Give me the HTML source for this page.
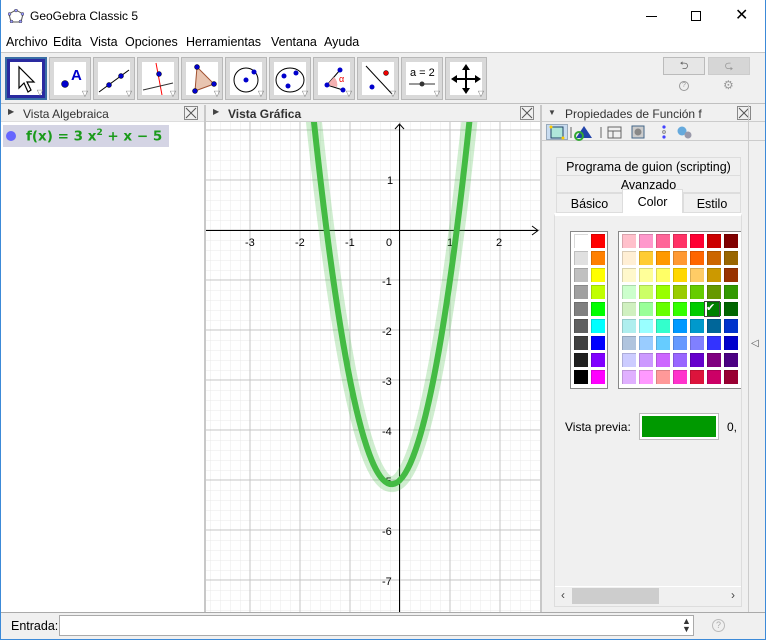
<!DOCTYPE html>
<html><head><meta charset="utf-8">
<style>
*{margin:0;padding:0;box-sizing:border-box}
body{width:766px;height:640px;overflow:hidden;background:#f0f0f0;font-family:"Liberation Sans",Arial,sans-serif;font-size:12px;color:#000;position:relative}
.a{position:absolute}
.btn{position:absolute;top:57px;width:42px;height:43px;background:#d9d9d9;border:1px solid #b8b8b8}
.btn .in{position:absolute;left:4px;top:4px;width:32px;height:33px;background:#fff}
.btn svg{position:absolute;left:4px;top:4px}
.tri{position:absolute;right:2px;bottom:1px;font-size:8px;color:#777}
.hdr{position:absolute;top:105px;height:17px;background:#f0f0f0;font-size:12px;color:#333}
.sw{position:absolute;width:14px;height:14px;border-left:1px solid rgba(0,0,0,.15);border-top:1px solid rgba(0,0,0,.15)}
.xb{position:absolute;width:14px;height:14px;border:1px solid #888;background:#f0f0f0}
.m{position:absolute;top:35px;font-size:12.5px}
</style></head><body>
<div class="a" style="left:0;top:0;width:766px;height:640px;border:1px solid #3c8ad8;border-top:none"></div>
<div class="a" style="left:1px;top:0;width:764px;height:32px;background:#fff"></div>
<svg class="a" style="left:8px;top:9px" width="16" height="14"><polygon points="8,1 15,5 13,13 3,13 1,5" fill="none" stroke="#555" stroke-width="1"/><g fill="#99f" stroke="#333" stroke-width=".5"><circle cx="8" cy="1.5" r="1.5"/><circle cx="14.5" cy="5" r="1.5"/><circle cx="12.5" cy="12.5" r="1.5"/><circle cx="3.5" cy="12.5" r="1.5"/><circle cx="1.5" cy="5" r="1.5"/></g></svg>
<div class="a" style="left:30px;top:9px;font-size:12px">GeoGebra Classic 5</div>
<div class="a" style="left:646px;top:16px;width:11px;height:1px;background:#000"></div>
<div class="a" style="left:691px;top:11px;width:10px;height:10px;border:1px solid #000"></div>
<div class="a" style="left:735px;top:8px;font-size:16px;line-height:16px">✕</div>
<div class="a" style="left:1px;top:32px;width:764px;height:21px;background:#fff;border-bottom:1px solid #c8c8c8"></div>
<span class="m" style="left:6px">Archivo</span><span class="m" style="left:53px">Edita</span><span class="m" style="left:90px">Vista</span><span class="m" style="left:125px">Opciones</span><span class="m" style="left:186px">Herramientas</span><span class="m" style="left:271px">Ventana</span><span class="m" style="left:324px">Ayuda</span>
<div class="a" style="left:1px;top:53px;width:764px;height:51px;background:#f0f0f0;border-bottom:1px solid #c0c0c0"></div>
<div class="btn" style="left:5px;border:2px solid #3a6ea5;background:#2a2aa0"><div class="in" style="left:3px;top:3px;width:32px;height:33px"></div>
<svg width="34" height="35" style="left:3px;top:3px"><path d="M9 5 L9 26 L14 21 L18 30 L21 28 L17 20 L24 20 Z" fill="#fff" stroke="#000" stroke-width="1.2"/></svg><span class="tri">▽</span></div>
<div class="btn" style="left:49px"><div class="in"></div><svg width="32" height="33"><circle cx="11" cy="22" r="3.5" fill="#00c" stroke="#000" stroke-width=".5"/><text x="17" y="18" font-size="15" font-weight="bold" fill="#00c" font-family="Liberation Sans">A</text></svg><span class="tri">▽</span></div>
<div class="btn" style="left:93px"><div class="in"></div><svg width="32" height="33"><line x1="1" y1="30" x2="31" y2="8" stroke="#000"/><circle cx="11" cy="23" r="2.5" fill="#00c" stroke="#000" stroke-width=".5"/><circle cx="23" cy="14" r="2.5" fill="#00c" stroke="#000" stroke-width=".5"/></svg><span class="tri">▽</span></div>
<div class="btn" style="left:137px"><div class="in"></div><svg width="32" height="33"><line x1="14" y1="1" x2="20" y2="33" stroke="#f00"/><line x1="1" y1="28" x2="31" y2="21" stroke="#333"/><circle cx="17" cy="12" r="2.5" fill="#00c" stroke="#000" stroke-width=".5"/></svg><span class="tri">▽</span></div>
<div class="btn" style="left:181px"><div class="in"></div><svg width="32" height="33"><polygon points="11,5 28,22 9,29" fill="#e8c4b0" stroke="#a05030"/><g fill="#00c" stroke="#000" stroke-width=".5"><circle cx="11" cy="5" r="2.5"/><circle cx="28" cy="22" r="2.5"/><circle cx="9" cy="29" r="2.5"/></g></svg><span class="tri">▽</span></div>
<div class="btn" style="left:225px"><div class="in"></div><svg width="32" height="33"><circle cx="16" cy="18" r="12" fill="none" stroke="#000"/><circle cx="16" cy="18" r="2.5" fill="#00c"/><circle cx="24" cy="10" r="2.5" fill="#00c"/></svg><span class="tri">▽</span></div>
<div class="btn" style="left:269px"><div class="in"></div><svg width="32" height="33"><ellipse cx="16" cy="18" rx="14" ry="12" fill="none" stroke="#000"/><circle cx="10" cy="14" r="2.5" fill="#00c"/><circle cx="22" cy="11" r="2.5" fill="#00c"/><circle cx="14" cy="24" r="2.5" fill="#00c"/></svg><span class="tri">▽</span></div>
<div class="btn" style="left:313px"><div class="in"></div><svg width="32" height="33"><path d="M9 23 L22 8 M9 23 L25 28" stroke="#000" fill="none"/><path d="M9 23 L16 15 A10 10 0 0 1 19 25 Z" fill="#f4b0b0"/><text x="21" y="20" font-size="9" fill="#e00">α</text><g fill="#00c"><circle cx="9" cy="23" r="2.5"/><circle cx="22" cy="8" r="2.5"/><circle cx="25" cy="28" r="2.5"/></g></svg><span class="tri">▽</span></div>
<div class="btn" style="left:357px"><div class="in"></div><svg width="32" height="33"><line x1="4" y1="4" x2="30" y2="32" stroke="#000"/><circle cx="10" cy="25" r="2.5" fill="#00c"/><circle cx="24" cy="11" r="2.5" fill="#e00" stroke="#000" stroke-width=".5"/></svg><span class="tri">▽</span></div>
<div class="btn" style="left:401px"><div class="in"></div><svg width="32" height="33"><text x="4" y="14" font-size="11" font-family="Liberation Sans">a = 2</text><line x1="3" y1="22" x2="29" y2="22" stroke="#333"/><circle cx="16" cy="22" r="2.5" fill="#333"/></svg><span class="tri">▽</span></div>
<div class="btn" style="left:445px"><div class="in"></div><svg width="32" height="33"><path d="M16 4 V30 M3 17 H29" stroke="#000" stroke-width="2"/><path d="M16 2 L12 8 H20Z M16 32 L12 26 H20Z M1 17 L7 13 V21Z M31 17 L25 13 V21Z" fill="#000"/></svg><span class="tri">▽</span></div>
<div class="a" style="left:663px;top:57px;width:42px;height:18px;border:1px solid #bbb;background:#e6e6e6;text-align:center;color:#666;font-size:11px;line-height:16px">⮌</div>
<div class="a" style="left:708px;top:57px;width:42px;height:18px;border:1px solid #ccc;background:#d6d6d6;text-align:center;color:#999;font-size:11px;line-height:16px">⮎</div>
<div class="a" style="left:679px;top:81px;width:10px;height:10px;border:1px solid #999;border-radius:50%;font-size:7px;color:#999;text-align:center;line-height:8px">?</div>
<div class="a" style="left:723px;top:78px;font-size:12px;color:#999">⚙</div>
<div class="a" style="left:1px;top:105px;width:203px;height:507px;background:#fff"></div>
<div class="hdr" style="left:1px;width:203px;border-bottom:1px solid #ddd"><span class="a" style="left:7px;top:2px;font-size:8px;color:#444">▶</span><span class="a" style="left:22px;top:2px">Vista Algebraica</span></div>
<div class="xb" style="left:184px;top:106px"><svg class="a" style="left:0;top:0" width="12" height="12"><path d="M1 1L11 11M11 1L1 11" stroke="#555"/></svg></div>
<div class="a" style="left:3px;top:125px;width:166px;height:22px;background:#d4d4e4"></div>
<div class="a" style="left:6px;top:131px;width:10px;height:10px;border-radius:50%;background:#6666ff"></div>
<div class="a" style="left:26px;top:128px;font-family:'DejaVu Sans',sans-serif;font-weight:bold;font-size:13.5px;color:#1a9a1a;white-space:nowrap">f(x) = 3 x<sup style="font-size:9px">2</sup> + x − 5</div>
<div class="a" style="left:204px;top:105px;width:2px;height:507px;background:#c8c8c8"></div>
<div class="a" style="left:540px;top:105px;width:2px;height:507px;background:#c8c8c8"></div>
<div class="hdr" style="left:206px;width:334px;border-bottom:1px solid #ccc"><span class="a" style="left:7px;top:2px;font-size:8px;color:#444">▶</span><span class="a" style="left:22px;top:2px;font-weight:bold;color:#333">Vista Gráfica</span></div>
<div class="xb" style="left:520px;top:106px"><svg class="a" style="left:0;top:0" width="12" height="12"><path d="M1 1L11 11M11 1L1 11" stroke="#555"/></svg></div>
<svg class="a" style="left:206px;top:122px" width="334" height="490">
<defs><pattern id="mn" x="4" y="8" width="10" height="10" patternUnits="userSpaceOnUse"><path d="M0 0H10M0 0V10" stroke="#e8e8e8" stroke-width="1" fill="none"/></pattern>
<pattern id="mj" x="-6.5" y="7.5" width="50" height="50" patternUnits="userSpaceOnUse"><path d="M0 0.5H50M0.5 0V50" stroke="#c4c4c4" stroke-width="1" fill="none"/></pattern></defs>
<rect width="334" height="490" fill="#fff"/>
<rect width="334" height="490" fill="url(#mn)"/>
<rect width="334" height="490" fill="url(#mj)"/>
<line x1="0" y1="108.5" x2="332" y2="108.5" stroke="#000"/>
<line x1="193.5" y1="2" x2="193.5" y2="490" stroke="#000"/>
<path d="M189 7 L193.5 2 L198 7 M326 104 L332 108.5 L326 113" stroke="#000" fill="none"/>
<g font-family="Liberation Sans" font-size="11" fill="#000">
<text x="39" y="124">-3</text><text x="89" y="124">-2</text><text x="139" y="124">-1</text><text x="180" y="124">0</text><text x="241" y="124">1</text><text x="290" y="124">2</text>
<text x="181" y="62">1</text><text x="176" y="163">-1</text><text x="176" y="213">-2</text><text x="176" y="263">-3</text><text x="176" y="313">-4</text><text x="176" y="363">-5</text><text x="176" y="413">-6</text><text x="176" y="463">-7</text>
</g>
<path d="M104 -38 Q186.5 770.5 269 -54.5" fill="none" stroke="#44bb44" stroke-opacity="0.25" stroke-width="16"/>
<path d="M104 -38 Q186.5 770.5 269 -54.5" fill="none" stroke="#44bb44" stroke-width="6"/>
</svg>
<div class="hdr" style="left:542px;width:223px;border-bottom:1px solid #ccc"><span class="a" style="left:6px;top:3px;font-size:8px;color:#444">▼</span><span class="a" style="left:23px;top:2px">Propiedades de Función f</span></div>
<div class="xb" style="left:737px;top:106px"><svg class="a" style="left:0;top:0" width="12" height="12"><path d="M1 1L11 11M11 1L1 11" stroke="#555"/></svg></div>
<div class="a" style="left:542px;top:123px;width:223px;height:18px;border-bottom:1px solid #ccc"></div>
<div class="a" style="left:546px;top:124px;width:22px;height:16px;background:#c8dcf0;border:1px solid #9ab"></div>
<svg class="a" style="left:546px;top:123px" width="160" height="18"><rect x="5" y="4" width="12" height="11" fill="#7fa" fill-opacity=".3" stroke="#246"/><g fill="#fc0"><circle cx="5" cy="4" r="1.5"/><circle cx="17" cy="15" r="1.5"/></g><line x1="25" y1="4" x2="25" y2="15" stroke="#666"/><polygon points="38,3 46,15 30,15" fill="#24a"/><circle cx="33" cy="13" r="4" fill="none" stroke="#3a3" stroke-width="2"/><line x1="55" y1="4" x2="55" y2="15" stroke="#666"/><rect x="62" y="4" width="13" height="11" fill="none" stroke="#666"/><line x1="62" y1="8" x2="75" y2="8" stroke="#666"/><line x1="67" y1="8" x2="67" y2="15" stroke="#666"/><rect x="86" y="3" width="12" height="12" fill="#ccc" stroke="#468"/><circle cx="92" cy="9" r="3.5" fill="#888"/><g fill="#44f"><circle cx="118" cy="4" r="1.6"/><circle cx="118" cy="14" r="1.6"/></g><circle cx="118" cy="9" r="1.4" fill="none" stroke="#888"/><circle cx="136" cy="8" r="4.5" fill="#6ad"/><circle cx="142" cy="12" r="3.5" fill="#99a"/></svg>
<div class="a" style="left:556px;top:157px;width:185px;height:19px;border:1px solid #ddd;text-align:center;font-size:12.5px;line-height:19px">Programa de guion (scripting)</div>
<div class="a" style="left:556px;top:176px;width:185px;height:17px;border:1px solid #ddd;border-top:none;text-align:center;font-size:12.5px;line-height:19px">Avanzado</div>
<div class="a" style="left:556px;top:193px;width:67px;height:20px;border:1px solid #ddd;text-align:center;font-size:12.5px;line-height:21px">Básico</div>
<div class="a" style="left:622px;top:189px;width:61px;height:25px;background:#fff;border:1px solid #ddd;border-bottom:none;text-align:center;font-size:12.5px;line-height:24px">Color</div>
<div class="a" style="left:683px;top:193px;width:58px;height:20px;border:1px solid #ddd;text-align:center;font-size:12.5px;line-height:21px">Estilo</div>
<div class="a" style="left:554px;top:213px;width:188px;height:394px;border:1px solid #ddd;border-top:3px solid #fff"></div>
<div class="a" style="left:570px;top:231px;width:38px;height:158px;border:1px solid #888;background:#fff"></div>
<div class="a" style="left:618px;top:231px;width:123px;height:158px;border:1px solid #888;border-right:none;background:#fff;overflow:hidden"></div>
<div id="L"></div>
<div class="a" style="left:565px;top:420px;font-size:12px">Vista previa:</div>
<div class="a" style="left:639px;top:413px;width:80px;height:27px;border:1px solid #bbb;background:#fff"><div style="margin:2px;height:21px;background:#009900"></div></div>
<div class="a" style="left:727px;top:420px;font-size:12px">0,</div>
<div class="a" style="left:555px;top:586px;width:186px;height:20px;background:#f0f0f0;border-top:1px solid #fff"></div>
<div class="a" style="left:561px;top:588px;font-size:12px;color:#444">‹</div>
<div class="a" style="left:572px;top:588px;width:87px;height:16px;background:#cdcdcd"></div>
<div class="a" style="left:731px;top:588px;font-size:12px;color:#444">›</div>
<div class="a" style="left:751px;top:338px;font-size:10px;color:#555">◁</div>
<div class="a" style="left:748px;top:105px;width:1px;height:507px;background:#ccc"></div>
<div class="a" style="left:1px;top:612px;width:764px;height:1px;background:#aaa"></div>
<div class="a" style="left:11px;top:619px;font-size:12.5px">Entrada:</div>
<div class="a" style="left:59px;top:615px;width:635px;height:21px;background:#fff;border:1px solid #aaa"></div>
<div class="a" style="left:682px;top:617px;font-size:9px;line-height:8px;color:#333">▲<br>▼</div>
<div class="a" style="left:712px;top:619px;width:13px;height:13px;border:1px solid #bbb;border-radius:50%;font-size:9px;color:#aaa;text-align:center;line-height:11px">?</div>
<script>
var L=[["#fff","#f00"],["#e0e0e0","#ff8000"],["#c0c0c0","#ff0"],["#a0a0a0","#c0ff00"],["#808080","#0f0"],["#606060","#0ff"],["#404040","#00f"],["#202020","#8000ff"],["#000","#f0f"]];
var G=[["#ffc0cb","#ff99cc","#ff6699","#ff3366","#ff0033","#cc0000","#800000","#600"],
["#ffefd5","#ffcc33","#ff9900","#ff9933","#ff6600","#cc6600","#996600","#630"],
["#fff8cc","#ffff99","#ffff66","#ffd700","#ffcc66","#cc9900","#993300","#600"],
["#ccffcc","#ccff66","#99ff00","#99cc00","#66cc00","#669900","#339900","#360"],
["#d0f0c0","#99ff99","#66ff00","#33ff00","#00cc00","#008000","#006600","#030"],
["#afeeee","#99ffff","#33ffcc","#0099ff","#0099cc","#006699","#0033cc","#036"],
["#b0c4de","#99ccff","#66ccff","#6699ff","#8080ff","#3333ff","#0000cc","#006"],
["#ccccff","#cc99ff","#cc66ff","#9966ff","#6600cc","#800080","#4b0082","#306"],
["#e0b0ff","#ff99ff","#ff9999","#ff33cc","#dc143c","#cc0066","#990033","#603"]];
var h="";
for(var r=0;r<9;r++){for(var c=0;c<2;c++)h+='<div class="sw" style="left:'+(574+c*17)+'px;top:'+(234+r*17)+'px;background:'+L[r][c]+'"></div>';
for(var c=0;c<8;c++){var x=622+c*17;var w=x+14>741?741-x:14;if(w>0)h+='<div class="sw" style="left:'+x+'px;top:'+(234+r*17)+'px;width:'+w+'px;background:'+G[r][c]+'"></div>';}}
h+='<div class="a" style="left:704px;top:301px;width:16px;height:16px;border:1px solid #444"></div><div class="a" style="left:706px;top:301px;color:#fff;font-size:11px">✔</div>';
document.getElementById("L").innerHTML=h;
</script>
</body></html>
